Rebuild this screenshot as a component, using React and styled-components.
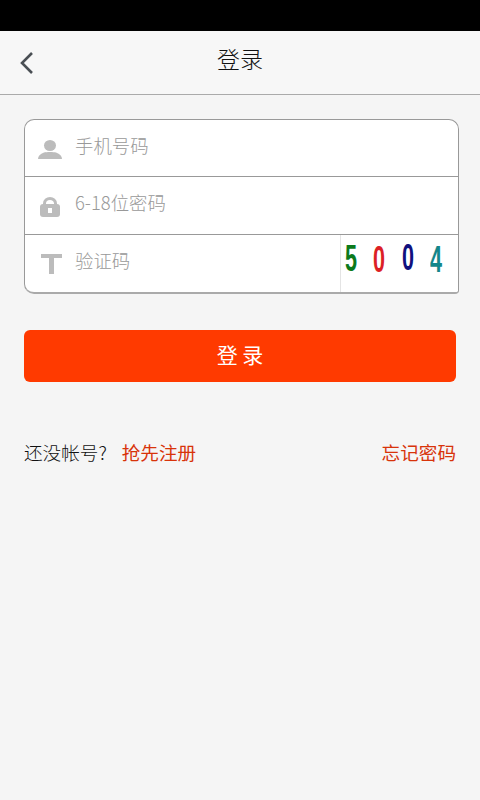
import React from "react";
import styled, { createGlobalStyle } from "styled-components";

const GlobalStyle = createGlobalStyle`
  html, body {
    margin: 0;
    padding: 0;
    background: #f5f5f5;
    font-family: "Noto Sans CJK SC", "Liberation Sans", sans-serif;
  }
`;

const UserIcon = () => (
  <svg width="24" height="19" viewBox="0 0 24 19">
    <ellipse cx="12" cy="5.500" rx="6" ry="5.500" fill="#bcbcbc" />
    <path d="M0 19c0-3 2-5 6-6.500 2-.8 10-.8 12 0 4 1.500 6 3.500 6 6.500z" fill="#bcbcbc" />
  </svg>
);

const LockIcon = () => (
  <svg width="20" height="20" viewBox="0 0 20 20">
    <path
      d="M4.500 9V6.500a5.500 5 0 0 1 11 0V9"
      fill="none"
      stroke="#bcbcbc"
      strokeWidth="3"
    />
    <rect x="0" y="7" width="20" height="13" rx="3" fill="#bcbcbc" />
    <rect x="8" y="11" width="4" height="5" fill="#fff" />
  </svg>
);

const TextIcon = () => (
  <svg width="21" height="20" viewBox="0 0 21 20">
    <path d="M0 0h21v4h-8v16H8V4H0z" fill="#bcbcbc" />
  </svg>
);

const BackIcon = () => (
  <svg width="16" height="24" viewBox="0 0 16 24">
    <path
      d="M14 2 4 12l10 10"
      fill="none"
      stroke="#4a4f54"
      strokeWidth="2.600"
    />
  </svg>
);

export default function App() {
  return (
    <Page>
      <GlobalStyle />
      <StatusBar />
      <Header>
        <BackButton>
          <BackIcon />
        </BackButton>
        <Title>登录</Title>
      </Header>
      <Content>
        <Form>
          <Row>
            <IconCell>
              <UserIcon />
            </IconCell>
            <Placeholder>手机号码</Placeholder>
          </Row>
          <Row>
            <IconCell $down="3px">
              <LockIcon />
            </IconCell>
            <Placeholder>6-18位密码</Placeholder>
          </Row>
          <Row $last>
            <IconCell $shift="1px">
              <TextIcon />
            </IconCell>
            <Placeholder>验证码</Placeholder>
            <Captcha>
              <Digit $color="#0c7a1c" $dy="-1px">5</Digit>
              <Digit $color="#dc1f26" $dy="0px">0</Digit>
              <Digit $color="#10107e" $dy="-2px">0</Digit>
              <Digit $color="#14868a" $dy="0px">4</Digit>
            </Captcha>
          </Row>
        </Form>
        <LoginButton>登 录</LoginButton>
        <Links>
          <Hint>
            还没帐号?<Accent $left>抢先注册</Accent>
          </Hint>
          <Accent>忘记密码</Accent>
        </Links>
      </Content>
    </Page>
  );
}

const Page = styled.div`
  width: 480px;
  height: 800px;
  overflow: hidden;
  background: #f5f5f5;
`;

const StatusBar = styled.div`
  height: 31px;
  background: #000;
`;

const Header = styled.div`
  height: 63px;
  display: flex;
  align-items: center;
  justify-content: center;
  position: relative;
  background: #f7f7f7;
  border-bottom: 1px solid #aaa;
`;

const BackButton = styled.div`
  position: absolute;
  left: 18px;
  top: 20px;
  display: flex;
`;

const Title = styled.div`
  font-size: 23px;
  font-weight: 300;
  color: #111;
  margin-bottom: 10px;
`;

const Content = styled.div`
  padding: 24px 24px 0;
`;

const Form = styled.div`
  width: 435px;
  box-sizing: border-box;
  background: #fff;
  border: 1px solid #999;
  border-bottom: 2px solid #aaa;
  border-left-width: 1.500px;
  border-right-width: 1.500px;
  border-radius: 10px 10px 4px 10px;
  overflow: hidden;
`;

const Row = styled.div`
  height: 57.340px;
  box-sizing: border-box;
  display: flex;
  align-items: center;
  border-bottom: ${(p) => (p.$last ? "none" : "1px solid #999")};
`;

const IconCell = styled.div`
  width: 50px;
  display: flex;
  justify-content: center;
  flex-shrink: 0;
  padding-top: ${(p) => p.$down || "2px"};
  margin-left: ${(p) => p.$shift || "0"};
  margin-right: ${(p) => (p.$shift ? `-${p.$shift}` : "0")};
`;

const Placeholder = styled.div`
  flex: 1;
  font-size: 18.400px;
  font-weight: 300;
  color: #999;
  padding-bottom: 6px;
`;

const Captcha = styled.div`
  width: 118px;
  height: 57px;
  box-sizing: border-box;
  display: flex;
  align-items: center;
  justify-content: space-between;
  padding: 0 12px 6px 0;
  background: #fff;
  border-left: 1px solid #e4e4e4;
  font-family: "Liberation Sans", sans-serif;
`;

const Digit = styled.span`
  color: ${(p) => p.$color};
  font-size: 36px;
  font-weight: 700;
  line-height: 1;
  display: inline-block;
  transform: translateY(${(p) => p.$dy}) scaleX(0.6);
`;

const LoginButton = styled.div`
  width: 432px;
  height: 52px;
  box-sizing: border-box;
  margin-top: 36px;
  padding-bottom: 4px;
  border-radius: 6px;
  background: #ff3a00;
  color: #fff;
  font-size: 21px;
  font-weight: 400;
  display: flex;
  align-items: center;
  justify-content: center;
`;

const Links = styled.div`
  width: 432px;
  margin-top: 56px;
  display: flex;
  justify-content: space-between;
  align-items: center;
  font-size: 18.600px;
  font-weight: 300;
`;

const Hint = styled.div`
  color: #111;
`;

const Accent = styled.span`
  color: #d8330a;
  font-weight: 400;
  margin-left: ${(p) => (p.$left ? "15px" : "0")};
`;
